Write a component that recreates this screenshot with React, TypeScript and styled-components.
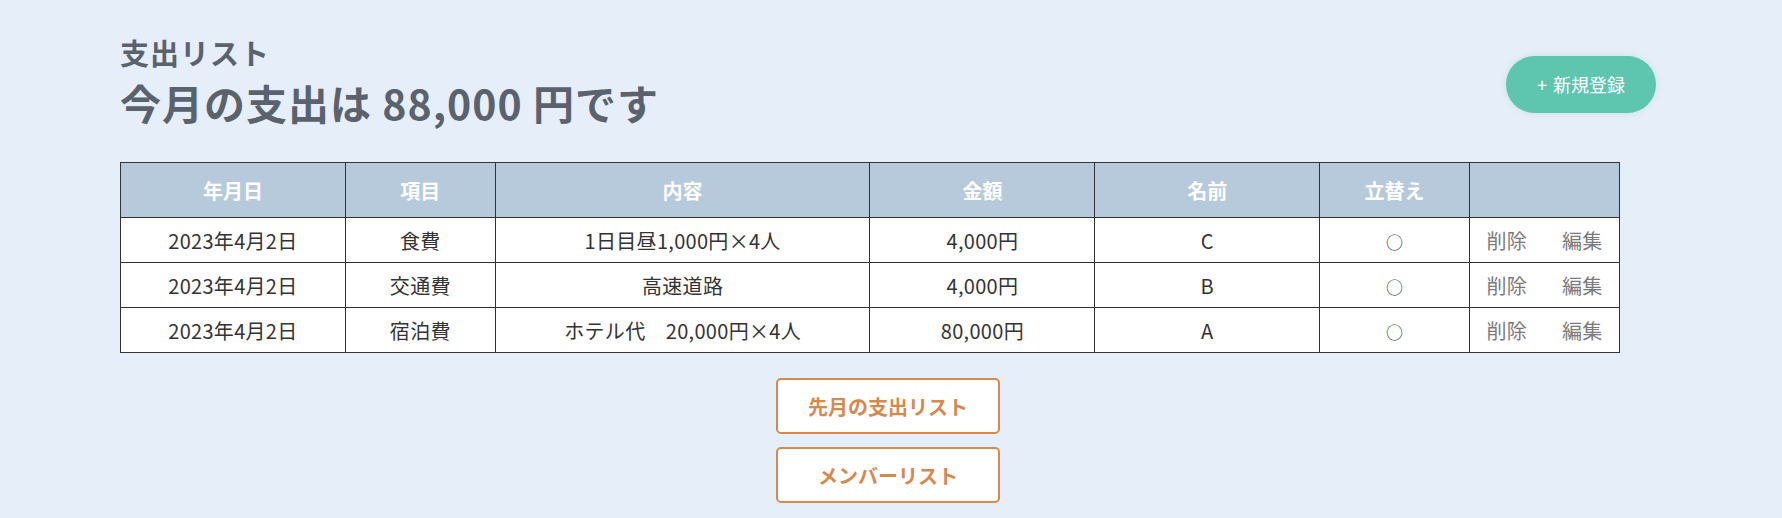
import React from 'react';
import styled, { createGlobalStyle } from 'styled-components';

type Expense = {
  date: string;
  item: string;
  detail: string;
  amount: string;
  name: string;
  advance: string;
};

const EXPENSES: Expense[] = [
  { date: '2023年4月2日', item: '食費', detail: '1日目昼1,000円×4人', amount: '4,000円', name: 'C', advance: '○' },
  { date: '2023年4月2日', item: '交通費', detail: '高速道路', amount: '4,000円', name: 'B', advance: '○' },
  { date: '2023年4月2日', item: '宿泊費', detail: 'ホテル代　20,000円×4人', amount: '80,000円', name: 'A', advance: '○' },
];

const COLUMNS = [
  { label: '年月日', width: '15%' },
  { label: '項目', width: '10%' },
  { label: '内容', width: '25%' },
  { label: '金額', width: '15%' },
  { label: '名前', width: '15%' },
  { label: '立替え', width: '10%' },
  { label: '', width: '10%' },
];

export default function App() {
  return (
    <>
      <GlobalStyle />
      <Page>
        <PageHeader>
          <TitleBlock>
            <PageTitle>支出リスト</PageTitle>
            <TotalText>今月の支出は 88,000 円です</TotalText>
          </TitleBlock>
          <NewButton>+ 新規登録</NewButton>
        </PageHeader>

        <ExpenseTable>
          <colgroup>
            {COLUMNS.map((c, i) => (
              <col key={i} style={{ width: c.width }} />
            ))}
          </colgroup>
          <thead>
            <tr>
              {COLUMNS.map((c, i) => (
                <HeadCell key={i}>{c.label}</HeadCell>
              ))}
            </tr>
          </thead>
          <tbody>
            {EXPENSES.map((e, i) => (
              <tr key={i}>
                <Cell>{e.date}</Cell>
                <Cell>{e.item}</Cell>
                <Cell>{e.detail}</Cell>
                <Cell>{e.amount}</Cell>
                <Cell>{e.name}</Cell>
                <Cell>
                  <Mark>{e.advance}</Mark>
                </Cell>
                <Cell>
                  <Actions>
                    <ActionLink>削除</ActionLink>
                    <ActionLink>編集</ActionLink>
                  </Actions>
                </Cell>
              </tr>
            ))}
          </tbody>
        </ExpenseTable>

        <LinkButtons>
          <OutlineButton>先月の支出リスト</OutlineButton>
          <OutlineButton>メンバーリスト</OutlineButton>
        </LinkButtons>
      </Page>
    </>
  );
}

const GlobalStyle = createGlobalStyle`
  body {
    margin: 0;
    background: #e6eef9;
    font-family: "Noto Sans CJK JP", "Noto Sans", sans-serif;
  }
`;

const Page = styled.main`
  min-height: 518px;
  padding: 35px 0 0 120px;
  box-sizing: border-box;
`;

const PageHeader = styled.header`
  width: 1536px;
  display: flex;
  justify-content: space-between;
  align-items: center;
`;

const TitleBlock = styled.div`
  display: flex;
  flex-direction: column;
  gap: 8px;
`;

const PageTitle = styled.h2`
  margin: 0;
  font-size: 29px;
  line-height: 35px;
  letter-spacing: 1px;
  font-weight: 700;
  color: #5a626e;
`;

const TotalText = styled.h1`
  margin: 0;
  font-size: 41px;
  line-height: 49px;
  letter-spacing: 1px;
  font-weight: 700;
  color: #5a626e;
`;

const NewButton = styled.button`
  width: 150px;
  height: 57px;
  margin-top: 6px;
  border: none;
  border-radius: 29px;
  background: #5ec5ae;
  color: #ffffff;
  font-family: inherit;
  font-size: 18px;
  word-spacing: 2px;
  box-shadow: 0 0 6px rgba(94, 197, 174, 0.25);
  cursor: pointer;
`;

const ExpenseTable = styled.table`
  margin-top: 35px;
  width: 1500px;
  border-collapse: collapse;
  table-layout: fixed;
  background: #ffffff;
`;

const HeadCell = styled.th`
  height: 54px;
  padding: 0;
  border: 1px solid #333333;
  background: #b7cadb;
  color: #ffffff;
  font-size: 20px;
  font-weight: 700;
  text-align: center;
`;

const Cell = styled.td`
  height: 44px;
  padding: 0;
  border: 1px solid #333333;
  color: #333333;
  font-size: 20px;
  letter-spacing: 0.3px;
  text-align: center;
`;

const Mark = styled.span`
  font-size: 17px;
  color: #444444;
`;

const Actions = styled.div`
  display: flex;
  justify-content: center;
  gap: 35px;
`;

const ActionLink = styled.span`
  color: #7a7a7a;
  cursor: pointer;
`;

const LinkButtons = styled.nav`
  margin: 25px 0 0 -126px;
  display: flex;
  flex-direction: column;
  align-items: center;
  gap: 13px;
`;

const OutlineButton = styled.button`
  width: 224px;
  height: 56px;
  border: 2px solid #d4894e;
  border-radius: 5px;
  background: #ffffff;
  color: #d4894e;
  font-family: inherit;
  font-size: 20px;
  font-weight: 700;
  cursor: pointer;
`;
